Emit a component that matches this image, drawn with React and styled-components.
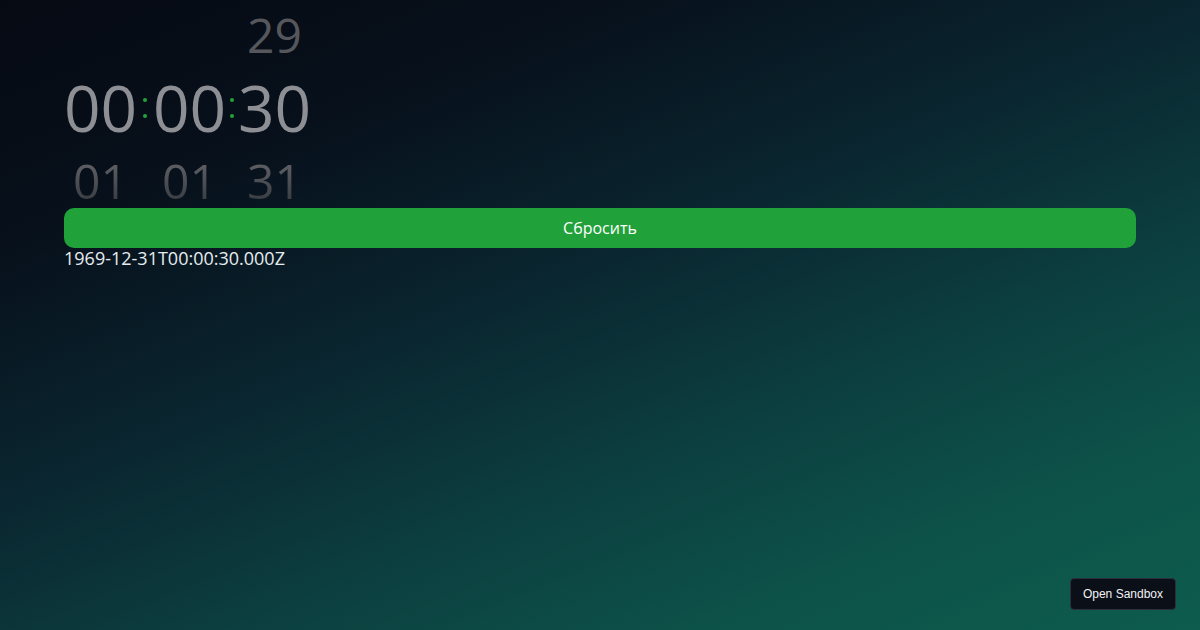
import React from "react";
import styled, { createGlobalStyle } from "styled-components";

const GlobalStyle = createGlobalStyle`
  html, body {
    margin: 0;
    padding: 0;
    height: 100%;
  }
  body {
    font-family: "Open Sans", "Noto Sans", sans-serif;
    background: linear-gradient(158deg, #060a13 0%, #07101b 22%, #0a2630 45%, #0c3f40 65%, #0d5249 82%, #0d5c4d 100%);
    color: #e9eef0;
  }
`;

const Page = styled.div`
  min-height: 630px;
  padding: 0 64px;
  box-sizing: border-box;
`;

const Clock = styled.div`
  display: flex;
  align-items: flex-start;
  height: 199px;
  overflow: hidden;
`;

const Column = styled.div`
  display: flex;
  flex-direction: column;
  align-items: center;
  flex-shrink: 0;
  width: 73px;
`;

const Cell = styled.div`
  flex-shrink: 0;
  font-size: ${(p) => (p.$current ? "64px" : "48px")};
  line-height: ${(p) => (p.$current ? "76px" : "70px")};
  height: ${(p) => (p.$current ? "76px" : "70px")};
  color: ${(p) => (p.$current ? "#8d8f94" : "#55575c")};
  white-space: nowrap;
  ${(p) =>
    p.$next &&
    `
    background: linear-gradient(180deg, #5a5c61 30%, #3c3f44 75%);
    -webkit-background-clip: text;
    background-clip: text;
    color: transparent;
  `}
`;

const Separator = styled.div`
  display: flex;
  flex-direction: column;
  align-items: center;
  flex-shrink: 0;
  gap: 12px;
  width: ${(p) => p.$w}px;
  padding-top: 98px;
`;

const Dot = styled.span`
  width: 4px;
  height: 4px;
  border-radius: 50%;
  background: #22a33a;
`;

const ResetButton = styled.button`
  display: block;
  width: 100%;
  height: 40px;
  margin-top: 9px;
  border: none;
  border-radius: 10px;
  background: #21a13a;
  color: #ffffff;
  font-family: "Open Sans", "Noto Sans", sans-serif;
  font-size: 16px;
  cursor: pointer;
`;

const Stamp = styled.div`
  margin-top: 1px;
  font-size: 18px;
  line-height: 18px;
  color: #e6ecee;
`;

const SandboxLink = styled.a`
  position: fixed;
  right: 24px;
  bottom: 20px;
  padding: 0 12px;
  height: 32px;
  line-height: 30px;
  background: #0b0f18;
  border: 1px solid #2b303a;
  border-radius: 4px;
  color: #f1f3f5;
  font-family: "Liberation Sans", Arial, sans-serif;
  font-size: 12px;
  text-decoration: none;
  box-sizing: border-box;
`;

const units = [
  { prev: "", cur: "00", next: "01" },
  { prev: "", cur: "00", next: "01" },
  { prev: "29", cur: "30", next: "31" },
];

const App = () => {
  return (
    <Page>
      <GlobalStyle />
      <Clock>
        {units.map((u, i) => (
          <React.Fragment key={i}>
            {i > 0 && (
              <Separator $w={i === 1 ? 16 : 12}>
                <Dot />
                <Dot />
              </Separator>
            )}
            <Column>
              <Cell>{u.prev}</Cell>
              <Cell $current>{u.cur}</Cell>
              <Cell $next>{u.next}</Cell>
            </Column>
          </React.Fragment>
        ))}
      </Clock>
      <ResetButton>Сбросить</ResetButton>
      <Stamp>1969-12-31T00:00:30.000Z</Stamp>
      <SandboxLink href="#">Open Sandbox</SandboxLink>
    </Page>
  );
};

export default App;
